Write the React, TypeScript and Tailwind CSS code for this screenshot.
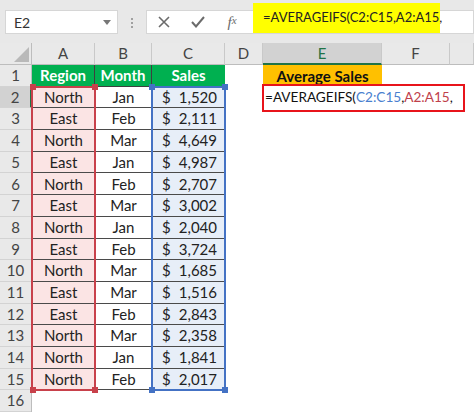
import { clsx as cn } from "clsx";

const data: [string, string, string][] = [
  ["North", "Jan", "1,520"],
  ["East", "Feb", "2,111"],
  ["North", "Mar", "4,649"],
  ["East", "Jan", "4,987"],
  ["North", "Feb", "2,707"],
  ["East", "Mar", "3,002"],
  ["North", "Jan", "2,040"],
  ["East", "Feb", "3,724"],
  ["North", "Mar", "1,685"],
  ["East", "Mar", "1,516"],
  ["East", "Feb", "2,843"],
  ["North", "Mar", "2,358"],
  ["North", "Jan", "1,841"],
  ["North", "Feb", "2,017"],
];

function ColHead({ label, selected }: { label?: string; selected?: boolean }) {
  return (
    <div
      className={cn(
        "h-[22px] flex items-center justify-center text-[15px] border-r border-[#c9c9c9]",
        selected
          ? "bg-[#d2d2d2] text-[#217346] border-b-2 border-b-[#217346]"
          : "bg-[#e9e9e9] text-[#444] border-b border-b-[#bdbdbd]"
      )}
    >
      {label}
    </div>
  );
}

function Handle({ pos, color }: { pos: string; color: string }) {
  return <span className={cn("absolute z-20 w-[6px] h-[6px]", pos, color)} />;
}

function TopBar() {
  return (
    <div className="h-[43px] bg-[#e8e8e8] flex items-start">
      {/* Name box */}
      <div className="shrink-0 ml-[5px] mt-[10px] w-[113px] h-[24px] bg-white border border-[#d6d6d6] flex items-center justify-between pl-[8px] pr-[6px] text-[14px] text-[#333]">
        <span>E2</span>
        <svg width="8" height="5" viewBox="0 0 8 5">
          <polygon points="0,0 8,0 4,5" fill="#777" />
        </svg>
      </div>

      {/* Splitter dots */}
      <div className="shrink-0 w-[28px] mt-[18px] flex flex-col items-center gap-[2px]">
        <span className="w-[2px] h-[2px] bg-[#a0a0a0]" />
        <span className="w-[2px] h-[2px] bg-[#a0a0a0]" />
        <span className="w-[2px] h-[2px] bg-[#a0a0a0]" />
      </div>

      {/* Formula bar */}
      <div className="mt-[10px] h-[24px] flex-1 min-w-0 bg-white border border-[#d6d6d6] flex items-start">
        <div className="shrink-0 w-[106px] h-full flex items-center">
          <span className="w-[34px] flex justify-center">
            <svg width="12" height="12" viewBox="0 0 12 12">
              <path d="M1 1 L11 11 M11 1 L1 11" stroke="#6b6b6b" strokeWidth="1.6" />
            </svg>
          </span>
          <span className="w-[34px] flex justify-center">
            <svg width="14" height="12" viewBox="0 0 14 12">
              <polyline points="1,6 5,10.5 13,1" fill="none" stroke="#6b6b6b" strokeWidth="2" />
            </svg>
          </span>
          <span className="w-[34px] flex justify-center italic font-['Liberation_Serif',serif] text-[15px] text-[#6b6b6b] leading-none">
            f<span className="text-[11px]">x</span>
          </span>
        </div>
        <div className="shrink-0 -mt-[8px] w-[187px] h-[30px] bg-[#ffff00] flex items-center pl-[10px] text-[13px] text-[#222] whitespace-nowrap">
          =AVERAGEIFS(C2:C15,A2:A15,
        </div>
      </div>
    </div>
  );
}

export default function App() {
  return (
    <div className="w-[474px] h-[412px] overflow-hidden bg-white font-['Lato',sans-serif]">
      <TopBar />

      <div className="flex">
        {/* Row headers */}
        <div className="shrink-0 w-[32px] flex flex-col bg-[#e9e9e9] border-r border-[#bdbdbd]">
          <div className="h-[22px] border-b border-[#bdbdbd] flex items-end justify-end pr-[2px] pb-[2px]">
            <svg width="15" height="15" viewBox="0 0 15 15">
              <polygon points="15,0 15,15 0,15" fill="#b9b9b9" />
            </svg>
          </div>
          {Array.from({ length: 16 }).map((_, i) => (
            <div
              key={i}
              className={cn(
                "h-[21.7px] border-b border-[#d3d3d3] flex items-center justify-center text-[15px] text-[#444]",
                i === 1 && "bg-[#d2d2d2] -mr-px border-r-2 border-r-[#217346]"
              )}
            >
              {i + 1}
            </div>
          ))}
        </div>

        {/* Column A */}
        <div className="shrink-0 w-[63px] flex flex-col">
          <ColHead label="A" />
          <div className="h-[21.7px] bg-[#00b050] text-white font-bold text-[15px] flex items-center justify-center border-r border-b border-[#3f3f3f]">
            Region
          </div>
          <div className="relative bg-[#fbe4e4] outline-2 outline-[#c8414b] -outline-offset-1">
            <Handle pos="-left-[2px] -top-[3px] w-[3px]" color="bg-[#c8414b]" />
            <Handle pos="-right-[3px] -top-[3px]" color="bg-[#c8414b]" />
            <Handle pos="-left-[2px] -bottom-[3px] w-[3px]" color="bg-[#c8414b]" />
            <Handle pos="-right-[3px] -bottom-[3px]" color="bg-[#c8414b]" />
            {data.map((r, i) => (
              <div
                key={i}
                className={cn(
                  "h-[21.7px] flex items-center justify-center text-[15px] text-[#222]",
                  i < data.length - 1 && "border-b border-[#4a4a4a]"
                )}
              >
                {r[0]}
              </div>
            ))}
          </div>
          <div className="h-[21.7px]" />
        </div>

        {/* Column B */}
        <div className="shrink-0 w-[57px] flex flex-col">
          <ColHead label="B" />
          <div className="h-[21.7px] bg-[#00b050] text-white font-bold text-[15px] flex items-center justify-center border-r border-b border-[#3f3f3f]">
            Month
          </div>
          {data.map((r, i) => (
            <div
              key={i}
              className="h-[21.7px] flex items-center justify-center text-[15px] text-[#222] border-b border-[#4a4a4a]"
            >
              {r[1]}
            </div>
          ))}
          <div className="h-[21.7px]" />
        </div>

        {/* Column C */}
        <div className="shrink-0 w-[73px] flex flex-col">
          <ColHead label="C" />
          <div className="h-[21.7px] bg-[#00b050] text-white font-bold text-[15px] flex items-center justify-center border-b border-[#3f3f3f]">
            Sales
          </div>
          <div className="relative bg-[#e7eef8] outline-2 outline-[#4472c4] -outline-offset-1">
            <Handle pos="-left-[3px] -top-[3px]" color="bg-[#4472c4]" />
            <Handle pos="-right-[3px] -top-[3px]" color="bg-[#4472c4]" />
            <Handle pos="-left-[3px] -bottom-[3px]" color="bg-[#4472c4]" />
            <Handle pos="-right-[3px] -bottom-[3px]" color="bg-[#4472c4]" />
            {data.map((r, i) => (
              <div
                key={i}
                className={cn(
                  "h-[21.7px] flex items-center justify-between pl-[10px] pr-[8px] text-[15px] text-[#222]",
                  i < data.length - 1 && "border-b border-[#4a4a4a]"
                )}
              >
                <span>$</span>
                <span>{r[2]}</span>
              </div>
            ))}
          </div>
          <div className="h-[21.7px]" />
        </div>

        {/* Column D */}
        <div className="shrink-0 w-[38px] flex flex-col">
          <ColHead label="D" />
        </div>

        {/* Column E */}
        <div className="shrink-0 w-[119px] min-w-0 flex flex-col">
          <ColHead label="E" selected />
          <div className="h-[21.7px] bg-[#ffc000] text-[#111] font-bold text-[15px] flex items-center justify-center">
            Average Sales
          </div>
          <div className="h-[21.7px] w-[119px]">
            <div className="relative z-10 -mt-[3px] -ml-[1px] w-[203px] h-[28px] bg-white border-2 border-[#e8141b] flex items-center pl-[1px] text-[13.6px] text-[#111] whitespace-nowrap">
              =AVERAGEIFS(
              <span className="text-[#4a7fcf]">C2:C15</span>,
              <span className="text-[#c0404b]">A2:A15</span>,
            </div>
          </div>
        </div>

        {/* Column F */}
        <div className="shrink-0 w-[68px] flex flex-col">
          <ColHead label="F" />
        </div>

        {/* Column G */}
        <div className="flex-1 min-w-0 flex flex-col">
          <ColHead />
        </div>
      </div>
    </div>
  );
}
